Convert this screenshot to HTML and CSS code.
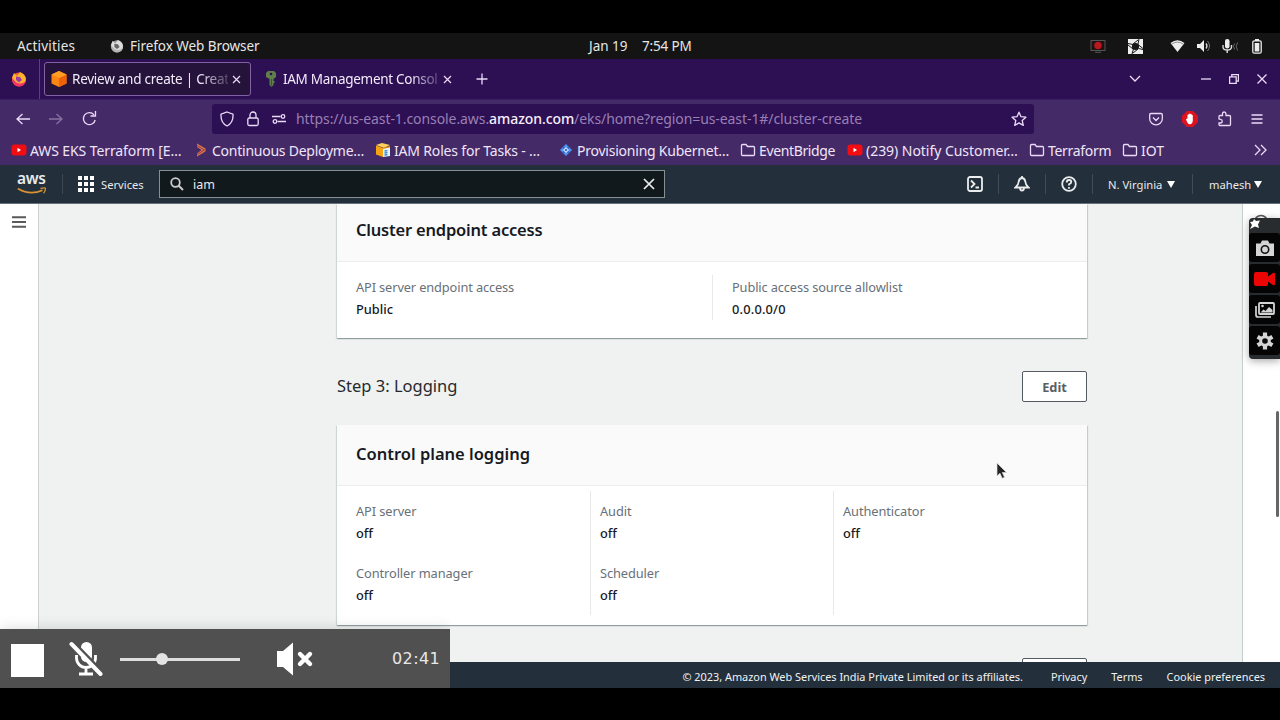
FILE: index.html
```html
<!doctype html>
<html lang="en">
<head>
    <meta charset="UTF-8">
    <meta name="viewport" content="width=device-width, initial-scale=1.0">
    <title>Review and create | Create EKS cluster</title>
    <link rel="stylesheet" href="styles.css">
</head>
<body>
    <div class="screen">
        <!-- system bar -->
        <div class="system-bar">
            <span class="activities">Activities</span>
            <svg class="app-icon" width="14" height="14" viewBox="0 0 16 16"><circle cx="8" cy="8.500" r="7" fill="#999"/><path d="M1 7l2-5 3 3 3-4c5 2 7 7 5 10L8 15z" fill="#ddd"/><path d="M1 7q1 8 7 8.500 6-.5 7-6-2 3-6 3T1 7z" fill="#b5b5b5"/><path d="M5 5.500l4 .5 2 3-3 2.500L5 9z" fill="#666"/></svg>
            <span class="app-name">Firefox Web Browser</span>
            <span class="clock-date">Jan 19</span>
            <span class="clock-time">7:54 PM</span>
            <div class="tray">
                <svg width="16" height="14" viewBox="0 0 16 14"><rect x="1" y="1.500" width="14" height="10" fill="#211" stroke="#555"/><path d="M5 13.300h6" stroke="#555"/><circle cx="8" cy="6.500" r="3.700" fill="#b8171e"/></svg>
                <svg class="tray-shutter" width="15" height="15" viewBox="0 0 15 15"><path fill="#eee" d="M0 0h15v15H0z"/><circle cx="7.500" cy="7.500" r="3.600" fill="#161616"/><path d="M0 4.500l5 1M5 5L10 1M10 5l1-5M10 5.500l5 4M10.500 9.500l4.500 1M10 10l-5 4M5.500 10L4 15M5 10L0 6" fill="none" stroke="#161616"/></svg>
                <svg class="tray-wifi" width="15" height="14" viewBox="0 0 15 14"><path d="M.5 4Q7.500-1.500 14.500 4L7.500 13z" fill="#eee"/><path d="M1.500 5.200Q7.500 1 13.500 5.200" fill="none" stroke="#777" stroke-width=".8"/></svg>
                <svg class="tray-sound" width="15" height="14" viewBox="0 0 15 14"><path d="M1 5h3l4-4v12L4 9H1z" fill="#eee"/><path d="M10 4.500q2 2.500 0 5" fill="none" stroke="#ddd" stroke-width="1.300"/><path d="M11.500 2q4 5 0 10" fill="none" stroke="#777"/></svg>
                <svg class="tray-mic" width="16" height="15" viewBox="0 0 16 15"><rect x="3" y="0" width="4.500" height="9.500" rx="2.200" fill="#eee"/><path d="M1 6v2q0 3 4.200 3t4.300-3V6M5.200 11v3" fill="none" stroke="#ddd" stroke-width="1.400"/><path d="M12.500 4.500q-2 3 0 6M15.500 3.500q-2.500 4 0 8" fill="none" stroke="#666"/></svg>
                <svg class="tray-battery" width="10" height="15" viewBox="0 0 10 15"><path d="M3 0h4v2H3z" fill="#eee"/><rect x=".8" y="1.800" width="8.400" height="12.400" rx="1.500" fill="none" stroke="#eee" stroke-width="1.300"/><path d="M2.700 4h4.600v8.500H2.700z" fill="#eee"/></svg>
            </div>
        </div>

        <!-- browser tabs -->
        <div class="tab-bar">
            <div class="pinned-tab">
                <svg width="16" height="16" viewBox="0 0 16 16"><circle cx="8" cy="8.500" r="7" fill="#ff5a36"/><path d="M1 7l2-5 3 3 3-4c5 2 7 7 5 10L8 15z" fill="#ffb52b"/><path d="M1 7q1 8 7 8.500 6-.5 7-6-2 3-6 3T1 7z" fill="#f5336c"/><path d="M5 5.500l4 .5 2 3-3 2.500L5 9z" fill="#a03ba8"/></svg>
            </div>
            <div class="tab tab-active">
                <svg class="tab-icon" width="16" height="16" viewBox="0 0 16 16"><path d="M8 0l7.500 3.500v9L8 16 .5 12.500v-9z" fill="#fb8613"/><path d="M8 7l7.500-3.500v9L8 16z" fill="#f0620a"/><path d="M.5 3.500L8 0l7.500 3.500L8 7z" fill="#ff9d24"/></svg>
                <span class="tab-title title-review">Review and create | Creat</span>
                <svg class="tab-close" width="9" height="9" viewBox="0 0 9 9"><path d="M1 1l7 7M8 1L1 8"/></svg>
            </div>
            <div class="tab tab-iam">
                <svg class="tab-icon" width="10" height="16" viewBox="0 0 10 16"><path d="M2 0h6l2 2v4L7.500 8v6L5.500 16 3.500 14V8L0 6V2z" fill="#5f7f4a"/><path d="M5.500 8v7" stroke="#36582c"/><circle cx="5" cy="3" r="1.300" fill="#2d0f53"/><path d="M6 10h2.500v2H6z" fill="#5f7f4a"/></svg>
                <span class="tab-title title-iam">IAM Management Consol</span>
                <svg class="tab-close" width="9" height="9" viewBox="0 0 9 9"><path d="M1 1l7 7M8 1L1 8"/></svg>
            </div>
            <svg class="new-tab line" width="12" height="12" viewBox="0 0 12 12"><path d="M6 .5v11M.5 6h11"/></svg>
            <div class="window-controls line">
                <svg width="12" height="8" viewBox="0 0 12 8"><path d="M1 1l5 5 5-5"/></svg>
                <svg class="win-min" width="10" height="10" viewBox="0 0 10 10"><path d="M0 5h10"/></svg>
                <svg class="win-max" width="10" height="10" viewBox="0 0 10 10"><path d="M.6 2.800h6.600v6.600H.6zM2.800 2.500V.6h6.600v6.600H7.500"/></svg>
                <svg class="win-close" width="10" height="10" viewBox="0 0 10 10"><path d="M.5.5l9 9M9.500.5l-9 9"/></svg>
            </div>
        </div>

        <!-- address bar -->
        <div class="nav-bar">
            <svg class="nav-back line" width="14" height="12" viewBox="0 0 14 12"><path d="M6.500 1L1 6l5.500 5M1 6h13"/></svg>
            <svg class="nav-forward line" width="14" height="12" viewBox="0 0 14 12"><path d="M7.500 1L13 6l-5.500 5M13 6H0"/></svg>
            <svg class="nav-reload line" width="15" height="15" viewBox="0 0 15 15"><path d="M13.200 9A6 6 0 1 1 12 3.800M13.500 0v5h-5"/></svg>
            <div class="url-bar line">
                <svg width="14" height="16" viewBox="0 0 14 16"><path d="M7 1l6 2.200c.4 6-2 9.800-6 11.800C3 13 .6 9.200 1 3.200z"/></svg>
                <svg class="url-lock" width="12" height="16" viewBox="0 0 12 16"><rect x=".8" y="7" width="10.400" height="7.500" rx="1.500"/><path d="M3 7V4a3 3 0 0 1 6 0v3"/></svg>
                <svg class="url-perms" width="14" height="10" viewBox="0 0 14 10"><path d="M0 2.500h8.500M5.500 7.500H14"/><circle cx="11" cy="2.500" r="1.800"/><circle cx="3" cy="7.500" r="1.800"/></svg>
                <span class="url">https://us-east-1.console.aws.<b>amazon.com</b>/eks/home?region=us-east-1#/cluster-create</span>
                <svg class="url-star" width="16" height="16" viewBox="0 0 16 16"><path d="M8 1.200l2 4.500 4.900.5-3.700 3.300 1.100 4.900L8 11.900l-4.300 2.500 1.100-4.900L1.100 6.200 6 5.700z" stroke-linejoin="round"/></svg>
            </div>
            <div class="nav-tools">
                <svg class="line" width="14" height="14" viewBox="0 0 14 14"><path d="M2 1.500h10q1.300 0 1.300 1.300V7A6.300 5.800 0 0 1 .7 7V2.800Q.7 1.500 2 1.500zM4 5.500l3 3 3-3"/></svg>
                <svg class="tool-block" width="18" height="18" viewBox="0 0 18 18"><path d="M6 1h6l5 5v6l-5 5H6l-5-5V6z" fill="#df1320"/><path d="M5 9l1.500-.5V5l1-.5.5-1 1 .5 1-.2.8 1 1 .5v5.500q-.5 3.500-3 3.500T5 9z" fill="#fff"/></svg>
                <svg class="tool-puzzle line" width="15" height="16" viewBox="0 0 15 16"><path d="M2 8V5.500q0-1 1-1h2.500V3q0-2 1.700-2T9 3v1.500h3.500q1 0 1 1v8q0 1-1 1H3q-1 0-1-1V12h1.500q1.700 0 1.700-1.800T3.500 8.300z"/></svg>
                <svg class="tool-menu line" width="12" height="12" viewBox="0 0 12 12"><path d="M.5 2h11M.5 6h11M.5 10h11"/></svg>
            </div>
        </div>

        <!-- bookmarks -->
        <div class="bookmarks">
            <a class="bm bm-eks"><svg width="16" height="16" viewBox="0 0 16 16"><rect x=".5" y="2.500" width="15" height="11" rx="3" fill="#f20d12"/><path d="M6.500 5.800v4.400L10 8z" fill="#fff"/></svg><span>AWS EKS Terraform [E…</span></a>
            <a class="bm bm-deploy"><svg width="16" height="16" viewBox="0 0 16 16"><path d="M4 1.500l8.500 5v3L4 14.500v-3L8.500 8 4 5z" fill="#dc7545"/><path d="M4 3.500L11.500 8 4 12.500" fill="none" stroke="#94405b"/></svg><span>Continuous Deployme…</span></a>
            <a class="bm bm-roles"><svg width="16" height="16" viewBox="0 0 16 16"><path d="M1 3l6-2 8 2-6 3z" fill="#ffd05a"/><path d="M1 3.500l7 2.500v9l-7-2.500z" fill="#f6a414"/><path d="M8 6l7-2v3H8z" fill="#e08f10"/><path d="M8 7l7-1.500V14l-7 1z" fill="#e9f3fb"/><path d="M9.500 9l3-.4M9.500 11l3-.4M9.500 13l3-.4" stroke="#2786ca" stroke-width="1.300"/></svg><span>IAM Roles for Tasks - …</span></a>
            <a class="bm bm-kube"><svg width="16" height="16" viewBox="0 0 16 16"><path d="M8 2l6 6-6 6-6-6z" fill="#4d93f5"/><path d="M5 5l6 6M11 5l-6 6" stroke="#3368cb" stroke-width="2"/><path d="M8 5l3 3-3 3-3-3z" fill="#dceaff"/><circle cx="8" cy="8" r="1.300" fill="#3971d7"/></svg><span>Provisioning Kubernet…</span></a>
            <a class="bm bm-event"><svg class="line" width="16" height="16" viewBox="0 0 16 16"><path d="M1.500 3.500q0-1 1-1H6l1.500 2h6q1 0 1 1v7q0 1-1 1h-11q-1 0-1-1z"/></svg><span>EventBridge</span></a>
            <a class="bm bm-notify"><svg width="16" height="16" viewBox="0 0 16 16"><rect x=".5" y="2.500" width="15" height="11" rx="3" fill="#f20d12"/><path d="M6.500 5.800v4.400L10 8z" fill="#fff"/></svg><span>(239) Notify Customer…</span></a>
            <a class="bm bm-terraform"><svg class="line" width="16" height="16" viewBox="0 0 16 16"><path d="M1.500 3.500q0-1 1-1H6l1.500 2h6q1 0 1 1v7q0 1-1 1h-11q-1 0-1-1z"/></svg><span>Terraform</span></a>
            <a class="bm bm-iot"><svg class="line" width="16" height="16" viewBox="0 0 16 16"><path d="M1.500 3.500q0-1 1-1H6l1.500 2h6q1 0 1 1v7q0 1-1 1h-11q-1 0-1-1z"/></svg><span>IOT</span></a>
            <svg class="bm-more line" width="13" height="12" viewBox="0 0 13 12"><path d="M1 1l5 5-5 5M7 1l5 5-5 5"/></svg>
        </div>

        <!-- AWS header -->
        <header class="aws-header">
            <div class="aws-logo">
                <span>aws</span>
                <svg width="30" height="8" viewBox="0 0 30 8"><path d="M.8 1.500Q13 9 25.500 3.200" fill="none" stroke="#d99133" stroke-width="1.700"/><path d="M23.500 1.500q5-1.200 5 0 0 2.500-2 4.800" fill="none" stroke="#d99133" stroke-width="1.300"/></svg>
            </div>
            <svg class="apps-icon" width="16" height="16" viewBox="0 0 16 16" fill="#fff"><path d="M0 0h4v4H0zM6 0h4v4H6zM12 0h4v4h-4zM0 6h4v4H0zM6 6h4v4H6zM12 6h4v4h-4zM0 12h4v4H0zM6 12h4v4H6zM12 12h4v4h-4z"/></svg>
            <span class="services">Services</span>
            <div class="search">
                <svg width="14" height="14" viewBox="0 0 14 14"><circle cx="5.500" cy="5.500" r="4.300" fill="none" stroke="#ccc" stroke-width="1.800"/><path d="M8.500 8.500l4.500 4.500" stroke="#ccc" stroke-width="2"/></svg>
                <span>iam</span>
                <svg class="search-clear" width="12" height="12" viewBox="0 0 12 12"><path d="M1 1l10 10M11 1L1 11" stroke="#eee" stroke-width="1.700"/></svg>
            </div>
            <div class="header-item header-shell">
                <svg width="16" height="16" viewBox="0 0 16 16"><rect x="1" y="1" width="14" height="14" rx="2"/><path d="M4 4.500L7.500 8 4 11.500M8.500 11.500H12"/></svg>
            </div>
            <div class="header-item header-bell">
                <svg width="16" height="16" viewBox="0 0 16 16"><path d="M1.500 11.500q3-2.500 3.200-6Q5.500 2 8 2t3.300 3.500q.2 3.500 3.200 6zM8 0v2M6 12q0 2.500 2 2.500t2-2.500"/></svg>
            </div>
            <div class="header-item header-help">
                <svg width="16" height="16" viewBox="0 0 16 16"><circle cx="8" cy="8" r="6.800"/><path d="M5.700 6.500q0-2.500 2.300-2.500t2.300 2Q10.300 7.200 8 8.300v1.200M8 11v1.700"/></svg>
            </div>
            <div class="header-item header-region"><span>N. Virginia</span><i class="caret"></i></div>
            <div class="header-item header-user"><span>mahesh</span><i class="caret"></i></div>
        </header>

        <!-- console page -->
        <div class="console">
            <nav class="side-nav">
                <svg width="14" height="12" viewBox="0 0 14 12"><path d="M0 1.200h14M0 6h14M0 10.800h14" stroke="#585a5b" stroke-width="1.900"/></svg>
            </nav>
            <main class="content">
                <section class="card card-endpoint">
                    <h2>Cluster endpoint access</h2>
                    <div class="endpoint-grid">
                        <dl><dt>API server endpoint access</dt><dd>Public</dd></dl>
                        <dl><dt>Public access source allowlist</dt><dd class="cidr">0.0.0.0/0</dd></dl>
                    </div>
                </section>

                <div class="step">
                    <h1>Step 3: Logging</h1>
                    <button class="edit">Edit</button>
                </div>

                <section class="card card-logging">
                    <h2>Control plane logging</h2>
                    <div class="logging-grid">
                        <div class="log-col">
                            <dl><dt>API server</dt><dd>off</dd></dl>
                            <dl><dt>Controller manager</dt><dd>off</dd></dl>
                        </div>
                        <div class="log-col">
                            <dl><dt>Audit</dt><dd>off</dd></dl>
                            <dl><dt>Scheduler</dt><dd>off</dd></dl>
                        </div>
                        <div class="log-col">
                            <dl><dt>Authenticator</dt><dd>off</dd></dl>
                        </div>
                    </div>
                </section>

                <div class="step step-next"><button class="edit"></button></div>
            </main>
            <aside class="help-panel"></aside>
        </div>

        <footer class="aws-footer">
            <span class="copyright">© 2023, Amazon Web Services India Private Limited or its affiliates.</span>
            <span class="privacy">Privacy</span>
            <span class="terms">Terms</span>
            <span class="cookies">Cookie preferences</span>
        </footer>

        <!-- things floating over the page -->
        <div class="scroll-thumb"></div>
        <svg class="info-ring" width="16" height="16" viewBox="0 0 16 16"><circle cx="8" cy="8" r="6.500" fill="none" stroke="#555" stroke-width="1.500"/></svg>
        <div class="capture-tools">
            <div class="capture-pin"><svg width="12" height="12" viewBox="0 0 12 12"><path d="M5 1l2 2 4-.5-2 4 1 3.500-4-1.500L1 11l2-4-2-3 3-.5z" fill="#fff"/></svg></div>
            <div class="capture-btn"><svg width="20" height="18" viewBox="0 0 20 18"><path d="M1 4.500h4.500L7 1.500h6l1.500 3H19V17H1z" fill="#d5d5d5"/><circle cx="10" cy="10.500" r="3.700" fill="#d5d5d5" stroke="#111" stroke-width="1.600"/></svg></div>
            <div class="capture-btn"><svg width="21" height="16" viewBox="0 0 21 16"><path d="M0 3q0-2 2-2h10q2 0 2 2v2.500L19 2q2-1 2 1v10q0 2-2 1l-5-3.500V13q0 2-2 2H2q-2 0-2-2z" fill="#ec0505"/></svg></div>
            <div class="capture-btn"><svg width="20" height="16" viewBox="0 0 20 16"><path d="M1 4v9q0 2 2 2h13" fill="none" stroke="#d5d5d5" stroke-width="1.700"/><rect x="4" y="1" width="15" height="11" rx="1" fill="none" stroke="#d5d5d5" stroke-width="1.800"/><path d="M5.500 10.500l3-3 2 1.500 3.500-4 3.500 3v2.500z" fill="#d5d5d5"/><circle cx="7.500" cy="4" r="1.300" fill="#d5d5d5"/></svg></div>
            <div class="capture-btn"><svg width="18" height="18" viewBox="0 0 18 18"><g stroke="#d5d5d5" stroke-width="4.200"><path d="M9 .5v17M1.600 4.700l14.800 8.600M1.600 13.300l14.800-8.600"/></g><circle cx="9" cy="9" r="5.800" fill="#d5d5d5"/><circle cx="9" cy="9" r="2.800" fill="#0b0b0b"/></svg></div>
        </div>
        <svg class="pointer" width="12" height="18" viewBox="0 0 12 18"><path d="M1 1v13l3-2.700 2.200 5 2.300-1-2.200-4.800H10.500z" fill="#252525" stroke="#ddd" stroke-width=".7"/></svg>
        <div class="recorder">
            <div class="stop"></div>
            <svg class="rec-mic" width="34" height="36" viewBox="0 0 34 36"><rect x="12" y="1" width="11" height="20" rx="5.500" fill="#fff"/><path d="M7.500 14v3a9.500 9.500 0 0 0 19 0v-3M17 26v7M10 33h14" fill="none" stroke="#fff" stroke-width="2.800"/><path d="M5 1.500L34 31.500" stroke="#505050" stroke-width="3"/><path d="M2.500 3L31.500 33" stroke="#fff" stroke-width="4" stroke-linecap="round"/></svg>
            <div class="slider"><div class="knob"></div></div>
            <svg class="rec-sound" width="38" height="34" viewBox="0 0 38 34"><path d="M1 9h6l10-8.500v33L7 25H1z" fill="#fff"/><path d="M24 12l10 10M34 12l-10 10" stroke="#fff" stroke-width="4.400" stroke-linecap="round"/></svg>
            <span class="elapsed">02:41</span>
        </div>
    </div>
</body>
</html>
```
FILE: styles.css
```css
* {
    box-sizing: border-box;
}

body {
    margin: 0;
    background: #000;
    font-family: "Noto Sans", "Open Sans", sans-serif;
    overflow: hidden;
}

svg {
    display: block;
    flex: none;
}

span {
    white-space: nowrap;
}

.screen {
    position: relative;
    width: 1280px;
    height: 720px;
    padding: 33px 0 32px;
    overflow: hidden;
}

.line path,
.line circle,
.line rect {
    fill: none;
    stroke: #eadcf8;
    stroke-width: 1.3;
}

/* system bar */
.system-bar {
    display: flex;
    align-items: center;
    height: 26px;
    background: #141414;
    color: #e6e6e6;
    font-size: 13.500px;
    line-height: 26px;
}

.activities {
    width: 93px;
    padding-left: 17px;
    letter-spacing: .2px;
}

.app-icon {
    margin-left: 17px;
}

.app-name {
    width: 459px;
    padding-left: 6px;
    letter-spacing: -.05px;
}

.clock-date {
    width: 59px;
    padding-left: 6px;
}

.clock-time {
    width: 54px;
    letter-spacing: -.15px;
}

.tray {
    display: flex;
    align-items: center;
    margin-left: auto;
    padding-right: 18px;
}

.tray-shutter {
    margin-left: 22px;
}

.tray-wifi {
    margin-left: 27px;
}

.tray-sound {
    margin-left: 11px;
}

.tray-mic {
    margin-left: 11px;
}

.tray-battery {
    margin-left: 14px;
}

/* tabs */
.tab-bar {
    display: flex;
    align-items: center;
    height: 41px;
    background: #2d0f53;
    border-bottom: 1px solid #3a1e5f;
}

.pinned-tab {
    width: 40px;
    height: 40px;
    padding: 12px 0 0 11px;
    border-right: 1px solid #58407a;
}

.tab {
    display: flex;
    align-items: center;
    height: 34px;
    color: #f3eafa;
    font-size: 14px;
}

.tab-active {
    width: 207px;
    margin-left: 4px;
    padding-left: 6px;
    background: #25133b;
    border: 1px solid #8262a5;
    border-radius: 3px;
}

.tab-iam {
    width: 201px;
    padding-left: 15px;
}

.tab-title {
    width: 156px;
    -webkit-mask-image: linear-gradient(90deg, #000 82%, rgba(0, 0, 0, .2) 100%);
    mask-image: linear-gradient(90deg, #000 82%, rgba(0, 0, 0, .2) 100%);
}

.title-review {
    margin-left: 5px;
    font-size: 13.500px;
    letter-spacing: -.25px;
}

.title-iam {
    margin-left: 7px;
    font-size: 13.500px;
    letter-spacing: -.3px;
}

.tab-close {
    margin-left: 4px;
    fill: none;
    stroke: #eadcf8;
    stroke-width: 1.2;
}

.new-tab {
    margin-left: 24px;
}

.window-controls {
    display: flex;
    align-items: center;
    margin-left: auto;
    padding-right: 13px;
}

.win-min {
    margin-left: 60px;
}

.win-max,
.win-close {
    margin-left: 18px;
}

/* address bar */
.nav-bar {
    display: flex;
    align-items: center;
    height: 37px;
    background: #452a68;
}

.nav-back {
    margin-left: 16px;
}

.nav-forward {
    margin-left: 19px;
    opacity: .4;
}

.nav-reload {
    margin-left: 19px;
}

.url-bar {
    display: flex;
    align-items: center;
    width: 822px;
    height: 30px;
    margin-left: 115px;
    padding-left: 8px;
    background: #2d0f53;
    border-radius: 3px;
}

.url-lock {
    margin-left: 13px;
}

.url-perms {
    margin-left: 13px;
}

.url {
    width: 715px;
    margin-left: 10px;
    color: #9880b4;
    font-size: 14px;
    letter-spacing: -.08px;
}

.url b {
    color: #f7f0fc;
    font-weight: 500;
}

.nav-tools {
    display: flex;
    align-items: center;
    margin-left: auto;
    padding-right: 17px;
}

.tool-block {
    margin-left: 18px;
}

.tool-puzzle {
    margin-left: 18px;
}

.tool-menu {
    margin-left: 19px;
}

/* bookmarks */
.bookmarks {
    display: flex;
    align-items: center;
    height: 28px;
    padding: 0 0 2px 11px;
    background: #452a68;
    color: #f0e5f8;
    font-size: 14px;
}

.bm {
    display: flex;
    align-items: center;
    gap: 3px;
}

.bm-eks { width: 182px; letter-spacing: -.1px; }
.bm-deploy { width: 182px; letter-spacing: -.25px; }
.bm-roles { width: 183px; letter-spacing: -.18px; }
.bm-kube { width: 182px; letter-spacing: -.23px; }
.bm-event { width: 107px; letter-spacing: -.36px; }
.bm-notify { width: 182px; letter-spacing: -.04px; }
.bm-terraform { width: 93px; letter-spacing: -.3px; }
.bm-iot { width: 132px; }

/* AWS header */
.aws-header {
    display: flex;
    align-items: center;
    height: 38px;
    background: #232f3b;
    color: #e8eaeb;
    font-size: 11.200px;
}

.aws-logo {
    width: 63px;
    height: 20px;
    padding-left: 17px;
    border-right: 1px solid #3c4854;
}

.aws-logo span {
    display: block;
    height: 13px;
    font-size: 15.500px;
    line-height: 9px;
    font-weight: 600;
    letter-spacing: -.4px;
}

.apps-icon {
    margin-left: 15px;
}

.services {
    width: 58px;
    margin-left: 7px;
}

.search {
    display: flex;
    align-items: center;
    width: 506px;
    height: 28px;
    padding-left: 10px;
    background: #12191d;
    border: 1px solid #869093;
    font-size: 12.500px;
}

.search span {
    margin-left: 9px;
}

.search-clear {
    margin-left: auto;
    margin-right: 9px;
}

.header-item {
    display: flex;
    align-items: center;
    height: 20px;
    border-right: 1px solid #414c57;
}

.header-item svg {
    fill: none;
    stroke: #eaeded;
    stroke-width: 1.8;
}

.header-shell {
    width: 334px;
    padding-left: 302px;
}

.header-bell,
.header-help {
    width: 47px;
    padding-left: 15px;
}

.header-region {
    width: 100px;
    padding-left: 15px;
}

.header-region span {
    width: 59px;
}

.header-user {
    padding-left: 16px;
    border: 0;
}

.header-user span {
    width: 45px;
}

.caret {
    border: 4px solid transparent;
    border-top: 7px solid #fff;
    border-bottom: 0;
}

/* console page */
.console {
    display: flex;
    height: 459px;
    overflow: hidden;
    background: #eff2f1;
    border-top: 1px solid #66717a;
}

.side-nav {
    width: 39px;
    padding: 12px 0 0 12px;
    background: #fff;
    border-right: 1px solid #cdd0d1;
}

.content {
    width: 1203px;
    padding: 0 155px 0 298px;
}

.help-panel {
    width: 38px;
    background: #fff;
    border-left: 1px solid #c6cfd0;
}

.card {
    background: #fff;
    box-shadow: 0 1px 1px rgba(0, 28, 36, .2), 1px 1px 1px rgba(0, 28, 36, .15), -1px 1px 1px rgba(0, 28, 36, .1);
    color: #16191f;
}

.card h2 {
    margin: 0;
    padding-left: 19px;
    background: #fafafa;
    border-bottom: 1px solid #ebeeee;
    font-size: 16.500px;
    font-weight: 600;
}

.card-endpoint {
    height: 134px;
}

.card-endpoint h2 {
    height: 58px;
    line-height: 52px;
    letter-spacing: -.2px;
}

.endpoint-grid {
    display: grid;
    grid-template-columns: 1fr 1fr;
    padding-top: 13px;
}

.endpoint-grid dl {
    height: 45px;
    padding-top: 1px;
}

.endpoint-grid dt {
    letter-spacing: -.12px;
}

dl {
    margin: 0;
    padding-left: 19px;
}

dl + dl {
    border-left: 1px solid #e7eaea;
}

dt,
dd {
    margin: 0;
    font-size: 12.800px;
    line-height: 22px;
}

dt {
    color: #687078;
    letter-spacing: -.08px;
}

dd {
    color: #16191f;
    font-weight: 500;
}

.cidr {
    letter-spacing: .2px;
}

.step {
    display: flex;
    align-items: center;
    justify-content: space-between;
    height: 31px;
    margin: 33px 0 23px;
}

.step h1 {
    margin: -2px 0 0;
    color: #26292d;
    font-size: 16.500px;
    font-weight: 400;
}

.edit {
    width: 65px;
    height: 31px;
    padding: 0;
    background: #fff;
    border: 1px solid #545b64;
    border-radius: 2px;
    color: #5b5e63;
    font-family: inherit;
    font-size: 12.800px;
    font-weight: 700;
}

.card-logging {
    height: 200px;
}

.card-logging h2 {
    height: 61px;
    line-height: 58px;
}

.logging-grid {
    display: grid;
    grid-template-columns: 253px 243px 254px;
    padding-top: 5px;
}

.log-col {
    height: 124px;
    padding-top: 9px;
}

.log-col dl {
    height: 62px;
    border: 0;
}

.log-col + .log-col {
    border-left: 1px solid #e7eaea;
}

.log-col + .log-col dl {
    padding-left: 9px;
}

.step-next {
    justify-content: flex-end;
}

.aws-footer {
    display: flex;
    justify-content: flex-end;
    height: 26px;
    padding-right: 15px;
    background: #232f3b;
    color: #f1f3f3;
    font-size: 10.900px;
    line-height: 29px;
}

.privacy {
    margin-left: 28px;
}

.terms,
.cookies {
    margin-left: 24px;
}

/* floating widgets */
.scroll-thumb {
    position: absolute;
    left: 1276px;
    top: 411px;
    width: 3px;
    height: 106px;
    background: #666;
    border-radius: 2px;
}

.info-ring {
    position: absolute;
    left: 1253px;
    top: 214px;
}

.capture-tools {
    position: absolute;
    left: 1249px;
    top: 218px;
    display: flex;
    flex-direction: column;
    gap: 2px;
    width: 31px;
    height: 141px;
    background: #292c2e;
    border-radius: 4px 0 0 4px;
    box-shadow: 0 2px 8px rgba(0, 0, 0, .35);
}

.capture-pin {
    height: 13px;
}

.capture-btn {
    display: flex;
    align-items: center;
    justify-content: center;
    height: 29px;
    background: #050505;
    border-radius: 3px;
}

.pointer {
    position: absolute;
    left: 996px;
    top: 462px;
}

.recorder {
    position: absolute;
    left: 0;
    top: 629px;
    display: flex;
    align-items: center;
    width: 450px;
    height: 59px;
    padding-left: 11px;
    background: #505050;
    box-shadow: 0 0 14px rgba(0, 0, 0, .15);
    clip-path: inset(-15px 0 0 0);
}

.stop {
    width: 33px;
    height: 33px;
    margin-top: 3px;
    background: #fff;
}

.rec-mic {
    margin-left: 25px;
}

.slider {
    width: 120px;
    height: 3px;
    margin-top: 2px;
    margin-left: 17px;
    background: #ddd;
}

.knob {
    width: 12px;
    height: 12px;
    margin: -5px 0 0 36px;
    background: #e3e3e3;
    border-radius: 50%;
}

.rec-sound {
    margin-left: 36px;
}

.elapsed {
    margin-left: 78px;
    color: #e8e8e8;
    font-family: "DejaVu Sans", sans-serif;
    font-size: 16px;
    letter-spacing: .4px;
}
```
